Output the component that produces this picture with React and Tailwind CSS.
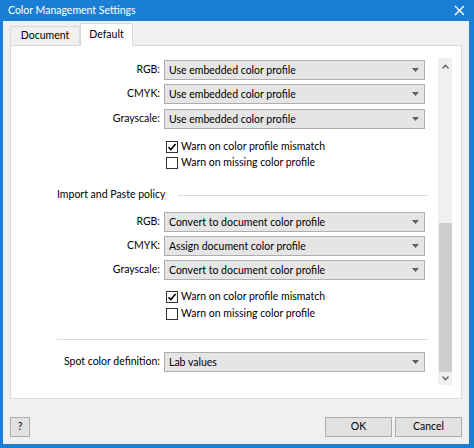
import React from "react";

const font = { fontFamily: 'Lato, "Noto Sans", sans-serif' };

function Select({ value }) {
  return (
    <div className="flex h-[20px] w-[261px] items-center justify-between border border-[#adadad] bg-[#e5e5e5] pl-[4px] pr-[5px] text-[10.5px] text-black">
      <span className="leading-none">{value}</span>
      <svg width="7" height="4" viewBox="0 0 7 4">
        <path d="M0 0h7L3.5 4z" fill="#606060" />
      </svg>
    </div>
  );
}

function Row({ label, value, className = "" }) {
  return (
    <div className={`flex items-center ${className}`}>
      <div className="w-[153px] pr-[4px] text-right text-[10.5px] text-black">{label}</div>
      <Select value={value} />
    </div>
  );
}

function Check({ label, checked, className = "" }) {
  return (
    <div className={`flex h-[16px] items-center pl-[155px] ${className}`}>
      <div className="flex h-[12px] w-[12px] items-center justify-center border border-[#333333] bg-white">
        {checked && (
          <svg width="10" height="10" viewBox="0 0 10 10">
            <path d="M1.5 5.2l2.3 2.4L8.6 2" fill="none" stroke="#000" strokeWidth="1.6" />
          </svg>
        )}
      </div>
      <span className="ml-[3px] text-[10.5px] text-black">{label}</span>
    </div>
  );
}

function Btn({ children, className = "" }) {
  return (
    <div className={`flex h-[20px] items-center justify-center border border-[#adadad] bg-[#e1e1e1] text-[10.5px] text-black ${className}`}>
      {children}
    </div>
  );
}

export default function App() {
  return (
    <div className="flex h-[448px] w-[474px] flex-col bg-[#1a7fd4]" style={font}>
      {/* Title bar */}
      <div className="flex h-[21px] items-center justify-between pl-[8px] pr-[9px] text-[10.5px] text-white">
        <span>Color Management Settings</span>
        <svg width="11" height="11" viewBox="0 0 11 11">
          <path d="M1 1l9 9M10 1l-9 9" stroke="#fff" strokeWidth="1.4" />
        </svg>
      </div>

      {/* Body */}
      <div className="ml-[3px] mr-[5px] mb-[4px] flex flex-1 flex-col bg-[#f0f0f0] px-[7px] pt-[2px]">
        {/* Tabs */}
        <div className="flex h-[22px] items-end">
          <div className="flex h-[19px] w-[70px] items-center justify-center border border-b-0 border-[#d9d9d9] bg-[#f0f0f0] text-[10.5px] text-black">
            Document
          </div>
          <div className="relative -mb-px flex h-[23px] w-[53px] items-center justify-center border border-b-0 border-[#d9d9d9] bg-white text-[10.5px] text-black">
            Default
          </div>
        </div>

        {/* Panel */}
        <div className="flex h-[354px] border border-[#d9d9d9] bg-white">
          <div className="w-[427px]">
            <Row label="RGB:" value="Use embedded color profile" className="mt-[14px]" />
            <Row label="CMYK:" value="Use embedded color profile" className="mt-[4px]" />
            <Row label="Grayscale:" value="Use embedded color profile" className="mt-[5px]" />
            <Check label="Warn on color profile mismatch" checked className="mt-[10px]" />
            <Check label="Warn on missing color profile" />

            <div className="mt-[16px] flex h-[16px] items-center pl-[46px] pr-[11px]">
              <span className="text-[10.5px] text-black">Import and Paste policy</span>
              <div className="ml-[13px] h-px flex-1 bg-[#dcdcdc]" />
            </div>

            <Row label="RGB:" value="Convert to document color profile" className="mt-[9px]" />
            <Row label="CMYK:" value="Assign document color profile" className="mt-[4px]" />
            <Row label="Grayscale:" value="Convert to document color profile" className="mt-[4px]" />
            <Check label="Warn on color profile mismatch" checked className="mt-[9px]" />
            <Check label="Warn on missing color profile" className="mt-[1px]" />

            <div className="ml-[46px] mr-[11px] mt-[17px] h-px bg-[#dcdcdc]" />

            <Row label="Spot color definition:" value="Lab values" className="mt-[12px]" />
          </div>

          {/* Scrollbar */}
          <div className="mt-[12px] flex h-[327px] w-[14px] flex-col items-center bg-[#f0f0f0]">
            <div className="flex h-[17px] w-full items-center justify-center">
              <svg width="7" height="5" viewBox="0 0 7 5">
                <path d="M0.5 4.5L3.5 1.2L6.5 4.5" fill="none" stroke="#606060" strokeWidth="1.4" />
              </svg>
            </div>
            <div className="mt-[148px] h-[149px] w-[13px] bg-[#cdcdcd]" />
            <div className="flex h-[13px] w-full items-center justify-center">
              <svg width="7" height="5" viewBox="0 0 7 5">
                <path d="M0.5 0.5L3.5 3.8L6.5 0.5" fill="none" stroke="#606060" strokeWidth="1.4" />
              </svg>
            </div>
          </div>
        </div>

        {/* Footer */}
        <div className="mt-[18px] flex items-center">
          <Btn className="w-[20px]">?</Btn>
          <div className="flex-1" />
          <Btn className="w-[67px]">OK</Btn>
          <Btn className="ml-[3px] w-[67px]">Cancel</Btn>
        </div>
      </div>
    </div>
  );
}
